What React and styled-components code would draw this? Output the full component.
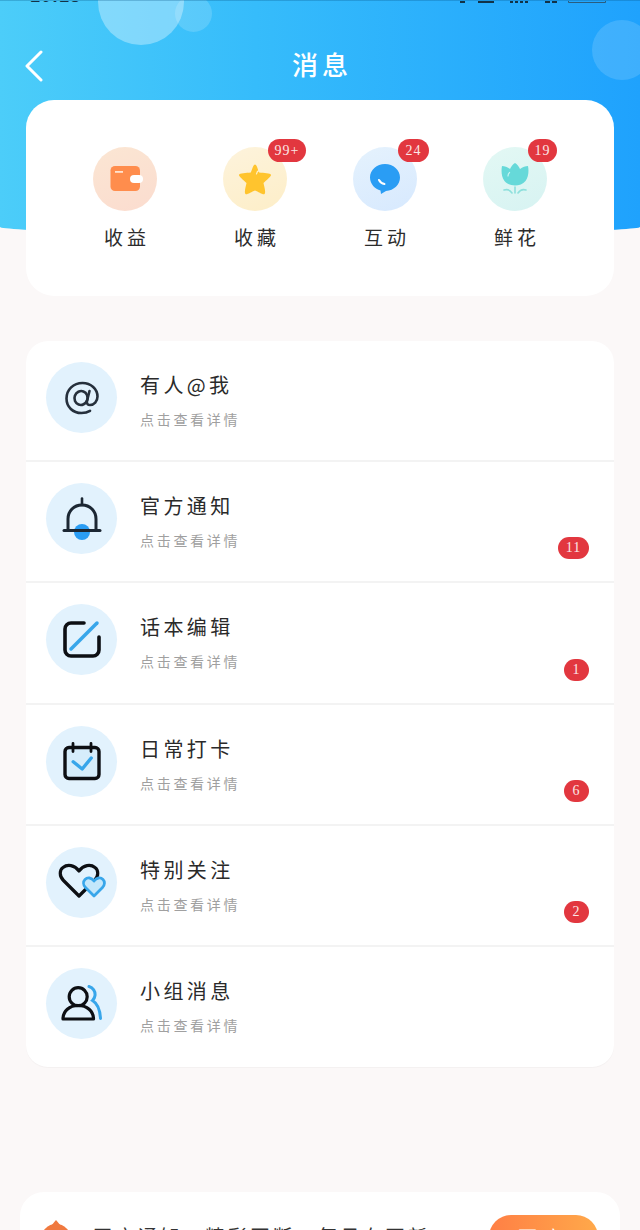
import React from 'react'
import styled, { createGlobalStyle } from 'styled-components'

const GlobalStyle = createGlobalStyle`
  html, body {
    margin: 0;
    padding: 0;
    background: #fbf8f8;
  }
  * { box-sizing: border-box; }
`

const Page = styled.div`
  width: 640px;
  height: 1230px;
  overflow: hidden;
  background: #fbf8f8;
  font-family: "Noto Sans CJK SC", "Noto Sans", sans-serif;
`
const Hero = styled.div`
  position: relative;
  height: 234px;
  overflow: hidden;
  background: linear-gradient(90deg, #4ccdf9 0%, #36bcfb 40%, #1fa2fd 100%);
  border-radius: 0 0 320px 320px / 0 0 7px 7px;
`
const Bubble = styled.div`
  position: absolute;
  left: ${p => p.$x}px;
  top: ${p => p.$y}px;
  width: ${p => p.$w}px;
  height: ${p => p.$w}px;
  border-radius: 50%;
  background: rgba(255, 255, 255, ${p => p.$a});
`
const StatusBar = styled.div`
  position: relative;
  display: flex;
  align-items: flex-end;
  justify-content: space-between;
  height: 3px;
  padding: 0 30px;
  overflow: hidden;
  border-top: 1px solid rgba(0, 70, 120, 0.25);
`
const Clock = styled.span`
  color: #123247;
  font-family: "Liberation Sans", sans-serif;
  font-size: 18px;
  font-weight: 700;
  line-height: 14px;
  letter-spacing: 1px;
`
const NavBar = styled.div`
  display: flex;
  align-items: center;
  justify-content: center;
  position: relative;
  height: 48px;
  margin-top: 36px;
`
const Back = styled.svg`
  position: absolute;
  left: 23px;
  top: 11px;
`
const Title = styled.h1`
  margin: 0;
  color: #fff;
  font-size: 26px;
  font-weight: 500;
  letter-spacing: 4px;
  padding-left: 4px;
`
const Content = styled.div`
  position: relative;
  margin-top: -134px;
  padding: 0 26px;
`
const TopCard = styled.div`
  display: grid;
  grid-template-columns: repeat(4, 130px);
  justify-content: center;
  height: 196px;
  padding-top: 47px;
  background: #fff;
  border-radius: 28px;
`
const TopItem = styled.div`
  display: flex;
  flex-direction: column;
  align-items: center;
`
const TopIcon = styled.div`
  position: relative;
  display: flex;
  align-items: center;
  justify-content: center;
  width: 64px;
  height: 64px;
  border-radius: 50%;
  background: ${p => p.$bg};
`
const Badge = styled.span`
  display: flex;
  align-items: center;
  justify-content: center;
  height: 23px;
  min-width: ${p => p.$w}px;
  padding: 0 4px;
  border-radius: 12px;
  background: #e2373f;
  color: #fbe6e6;
  font-family: "Liberation Serif", serif;
  font-size: 14px;
  letter-spacing: 1px;
`
const TopBadge = styled(Badge)`
  position: absolute;
  top: -8px;
  left: ${p => p.$left}px;
`
const TopLabel = styled.span`
  margin-top: 13px;
  padding-left: 4px;
  color: #2c2c2c;
  font-size: 19px;
  line-height: 26px;
  letter-spacing: 4px;
`
const ListCard = styled.div`
  margin-top: 45px;
  background: #fff;
  border-radius: 22px;
  box-shadow: 0 1px 1px rgba(0, 0, 0, 0.03);
`
const Row = styled.div`
  position: relative;
  display: flex;
  height: ${p => (p.$last ? '120px' : '121.2px')};
  padding: 21px 20px 0;
  border-bottom: ${p => (p.$last ? 'none' : '2px solid #f3f3f3')};
`
const RowIcon = styled.div`
  display: flex;
  align-items: center;
  justify-content: center;
  flex: none;
  width: 71px;
  height: 71px;
  border-radius: 50%;
  background: #e2f2fd;
`
const RowText = styled.div`
  display: flex;
  flex-direction: column;
  margin-left: 23px;
`
const RowTitle = styled.span`
  color: #2a2a2a;
  font-size: 20px;
  line-height: 28px;
  letter-spacing: 3.4px;
  margin-top: 9px;
`
const RowSub = styled.span`
  margin-top: 10px;
  color: #a0a0a0;
  font-size: 14px;
  line-height: 20px;
  letter-spacing: 2.7px;
`
const RowBadge = styled(Badge)`
  position: absolute;
  right: 25px;
  bottom: 22px;
  height: 22px;
`
const Promo = styled.div`
  display: flex;
  align-items: flex-start;
  height: 90px;
  margin: 125px -6px 0;
  padding: 23px 22px 0 21px;
  background: #fff;
  border-radius: 24px;
`
const PromoText = styled.span`
  flex: 1;
  margin-left: 22px;
  margin-top: 9px;
  color: #333;
  font-size: 19px;
  line-height: 24px;
  letter-spacing: 3.5px;
  white-space: nowrap;
`
const PromoButton = styled.button`
  flex: none;
  width: 109px;
  height: 46px;
  border: none;
  border-radius: 22px;
  background: linear-gradient(90deg, #ff7f45, #ffa94a);
  color: #fff;
  font-family: inherit;
  font-size: 20px;
  letter-spacing: 6px;
`
const PromoGlyph = styled.svg`
  flex: none;
  margin-top: 5px;
`

const StatusIcons = () => (
  <svg width="150" height="2" viewBox="0 0 150 2">
    <g fill="#123247">
      <rect x="0" y="0" width="5" height="2" />
      <rect x="18" y="0" width="16" height="2" />
      <rect x="50" y="0" width="3" height="2" />
      <rect x="55" y="0" width="3" height="2" />
      <rect x="60" y="0" width="3" height="2" />
      <rect x="65" y="0" width="3" height="2" />
      <rect x="85" y="0" width="5" height="2" />
      <rect x="92" y="0" width="5" height="2" />
    </g>
    <path d="M108.500 0v1.500h37V0" fill="none" stroke="#2a5d7f" strokeWidth="1" />
  </svg>
)
const Wallet = () => (
  <svg width="36" height="32" viewBox="0 0 36 32">
    <rect x="3.500" y="3" width="29.500" height="25" rx="4.500" fill="#ff8d4d" />
    <rect x="8" y="8" width="8" height="1.800" fill="#ffe3cf" />
    <rect x="23" y="12" width="13" height="8" rx="4" fill="#fff" />
  </svg>
)
const Star = () => (
  <svg width="34" height="32" viewBox="0 0 34 32">
    <path d="M17 1.500c1.500 0 2.400 3.600 4.200 8 4.600 .4 11.300 .7 11.800 2.300 .5 1.700-4.500 5.300-7.500 8.200 1 4.600 2.500 9.700 1 11-1.400 1-6-2.200-9.500-3.600-3.500 1.400-8.100 4.600-9.500 3.600-1.500-1.300 0-6.400 1-11C5.500 17.100 .5 13.500 1 11.800 1.500 10.200 8.200 9.900 12.800 9.500 14.600 5.100 15.500 1.500 17 1.500z" fill="#ffc42e" />
    <path d="M18.500 11c.4-2 1.200-3 2.200-3.400" fill="none" stroke="#fff2c9" strokeWidth="1.200" strokeLinecap="round" />
  </svg>
)
const Chat = () => (
  <svg width="32" height="32" viewBox="0 0 32 32">
    <path d="M16 1C7.700 1 1 7 1 14.500 1 21 6 26 11.500 27.500l.5 3.500 5-3C25 27.500 31 21.500 31 14.500 31 7 24.300 1 16 1z" fill="#2a9df4" />
    <path d="M10 17c1 2 3 3.500 5.500 4" fill="none" stroke="#fff" strokeWidth="2" strokeLinecap="round" />
  </svg>
)
const Flower = () => (
  <svg width="30" height="34" viewBox="0 0 30 34">
    <path d="M15 1C17 2 19 4.500 20 7 22.500 5 25.500 4 28 4 29 9 28.500 15 25.500 19 23 22 19 23.500 15 23.500 11 23.500 7 22 4.500 19 1.500 15 1 9 2 4 4.500 4 7.500 5 10 7 11 4.500 13 2 15 1z" fill="#66d9d9" />
    <path d="M8 14c0-1.500 .6-2.800 1.600-3.500" fill="none" stroke="#c9f3f2" strokeWidth="1.200" strokeLinecap="round" />
    <path d="M15 25v6M12 31C10 28 7 27 4 28M18 31C20 28 23 27 26 28" fill="none" stroke="#8ee0dc" strokeWidth="1.600" strokeLinecap="round" />
  </svg>
)
const AtSign = () => (
  <svg width="36" height="34" viewBox="0 0 36 34" fill="none" stroke="#26303c" strokeWidth="2.600" strokeLinecap="round">
    <ellipse cx="17" cy="17" rx="6.500" ry="7" transform="rotate(20 17 17)" />
    <path d="M25.500 10L23 20c-.6 2.800 1 4 3 4 4 0 7.500-3.500 7.500-8.500C33.500 8 27 2 18.500 2 9.500 2 2.500 8.500 2.500 17.500 2.500 26 9 32 17.500 32c3.300 0 6.300-.8 8.500-2.200" />
  </svg>
)
const Bell = () => (
  <svg width="40" height="46" viewBox="0 0 40 46" fill="none">
    <path d="M6 34V23C6 15 12 9 20 9s14 6 14 14v11" stroke="#1c2733" strokeWidth="3" />
    <path d="M20 2.500V9" stroke="#1c2733" strokeWidth="2.600" strokeLinecap="round" />
    <circle cx="20" cy="36" r="8" fill="#2a9df4" />
    <path d="M2 34.500h36" stroke="#1c2733" strokeWidth="3" strokeLinecap="round" />
  </svg>
)
const Edit = () => (
  <svg width="40" height="40" viewBox="0 0 40 40" fill="none">
    <path d="M22 3H9a6 6 0 0 0-6 6v21a6 6 0 0 0 6 6h22a6 6 0 0 0 6-6V17" stroke="#0d0f13" strokeWidth="3.600" strokeLinecap="round" />
    <path d="M9 29L35 3" stroke="#38a6ea" strokeWidth="3.500" strokeLinecap="round" />
  </svg>
)
const Calendar = () => (
  <svg width="40" height="40" viewBox="0 0 40 40" fill="none">
    <rect x="3" y="6.500" width="34" height="31" rx="4" fill="#d6edfb" stroke="#0d0f13" strokeWidth="3.400" />
    <path d="M11 2.500v8M29 2.500v8" stroke="#0d0f13" strokeWidth="2.800" strokeLinecap="round" />
    <path d="M11.200 20.700l9 7.300 9-11" stroke="#38a6ea" strokeWidth="3.400" strokeLinecap="round" strokeLinejoin="round" />
  </svg>
)
const Hearts = () => (
  <svg width="48" height="38" viewBox="0 0 48 38" fill="none">
    <path d="M21 33L5.500 17.500C1 13 1.500 7 5 4.500 9.500 1 16.500 2 21 8 25.500 2 32.500 1 37 4.500 40.500 7 41 13 36.500 17.500z" stroke="#0d0f13" strokeWidth="3.200" strokeLinejoin="round" />
    <path d="M36 33L27.500 24.500C25 22 25 18.500 27 16.500 29.500 14 33.500 14.500 36 18 38.500 14.500 42.500 14 45 16.500 47 18.500 47 22 44.500 24.500z" fill="#c4e7fb" stroke="#38a6ea" strokeWidth="2.800" strokeLinejoin="round" />
  </svg>
)
const Group = () => (
  <svg width="44" height="36" viewBox="0 0 44 36" fill="none">
    <circle cx="18.200" cy="11.700" r="9" stroke="#0d0f13" strokeWidth="3.200" />
    <path d="M3 34c0-8 6.500-13.500 15.200-13.500S33.500 26 33.500 34z" stroke="#0d0f13" strokeWidth="3.200" strokeLinejoin="round" />
    <path d="M29 1.500c4 1 6.500 5 6 9-.3 2.500-1.500 4-2.500 5 5 3 7.500 9 8 18" stroke="#38a6ea" strokeWidth="3" strokeLinecap="round" />
  </svg>
)
const PromoIcon = () => (
  <PromoGlyph width="30" height="34" viewBox="0 0 30 34">
    <circle cx="15" cy="19" r="15" fill="#f0793f" />
    <path d="M15 0l5 6H10z" fill="#f0793f" />
    <path d="M15 10v10l5 3" fill="none" stroke="#fff" strokeWidth="2.500" />
  </PromoGlyph>
)

const topItems = [
  { label: '收益', bg: 'linear-gradient(160deg, #fbe6d3, #fbdccf)', icon: <Wallet /> },
  { label: '收藏', bg: 'linear-gradient(160deg, #fdf3dc, #fdeec8)', icon: <Star />, badge: '99+', left: 45 },
  { label: '互动', bg: 'linear-gradient(160deg, #e5f2fd, #d7e9fe)', icon: <Chat />, badge: '24', left: 45, w: 31 },
  { label: '鲜花', bg: 'linear-gradient(160deg, #e3f8f4, #d7f3f2)', icon: <Flower />, badge: '19', left: 45, w: 29 },
]

const rows = [
  { title: '有人@我', icon: <AtSign /> },
  { title: '官方通知', icon: <Bell />, badge: '11', w: 31 },
  { title: '话本编辑', icon: <Edit />, badge: '1', w: 25 },
  { title: '日常打卡', icon: <Calendar />, badge: '6', w: 25 },
  { title: '特别关注', icon: <Hearts />, badge: '2', w: 25 },
  { title: '小组消息', icon: <Group /> },
]

function App() {
  return (
    <Page>
      <GlobalStyle />
      <Hero>
        <Bubble $x={98} $y={-41} $w={86} $a={0.34} />
        <Bubble $x={175} $y={-5} $w={37} $a={0.16} />
        <Bubble $x={592} $y={20} $w={60} $a={0.14} />
        <StatusBar>
          <Clock>10:18</Clock>
          <StatusIcons />
        </StatusBar>
        <NavBar>
          <Back width="20" height="32" viewBox="0 0 20 32" fill="none">
            <path d="M18 2L4 16l14 14" stroke="#fff" strokeWidth="3" strokeLinecap="round" strokeLinejoin="round" />
          </Back>
          <Title>消息</Title>
        </NavBar>
      </Hero>
      <Content>
        <TopCard>
          {topItems.map(item => (
            <TopItem key={item.label}>
              <TopIcon $bg={item.bg}>
                {item.icon}
                {item.badge && <TopBadge $left={item.left} $w={item.w || 38}>{item.badge}</TopBadge>}
              </TopIcon>
              <TopLabel>{item.label}</TopLabel>
            </TopItem>
          ))}
        </TopCard>
        <ListCard>
          {rows.map((row, i) => (
            <Row key={row.title} $last={i === rows.length - 1}>
              <RowIcon>{row.icon}</RowIcon>
              <RowText>
                <RowTitle>{row.title}</RowTitle>
                <RowSub>点击查看详情</RowSub>
              </RowText>
              {row.badge && <RowBadge $w={row.w}>{row.badge}</RowBadge>}
            </Row>
          ))}
        </ListCard>
        <Promo>
          <PromoIcon />
          <PromoText>开启通知，精彩不断，每日有更新</PromoText>
          <PromoButton>开启</PromoButton>
        </Promo>
      </Content>
    </Page>
  )
}

export default App
